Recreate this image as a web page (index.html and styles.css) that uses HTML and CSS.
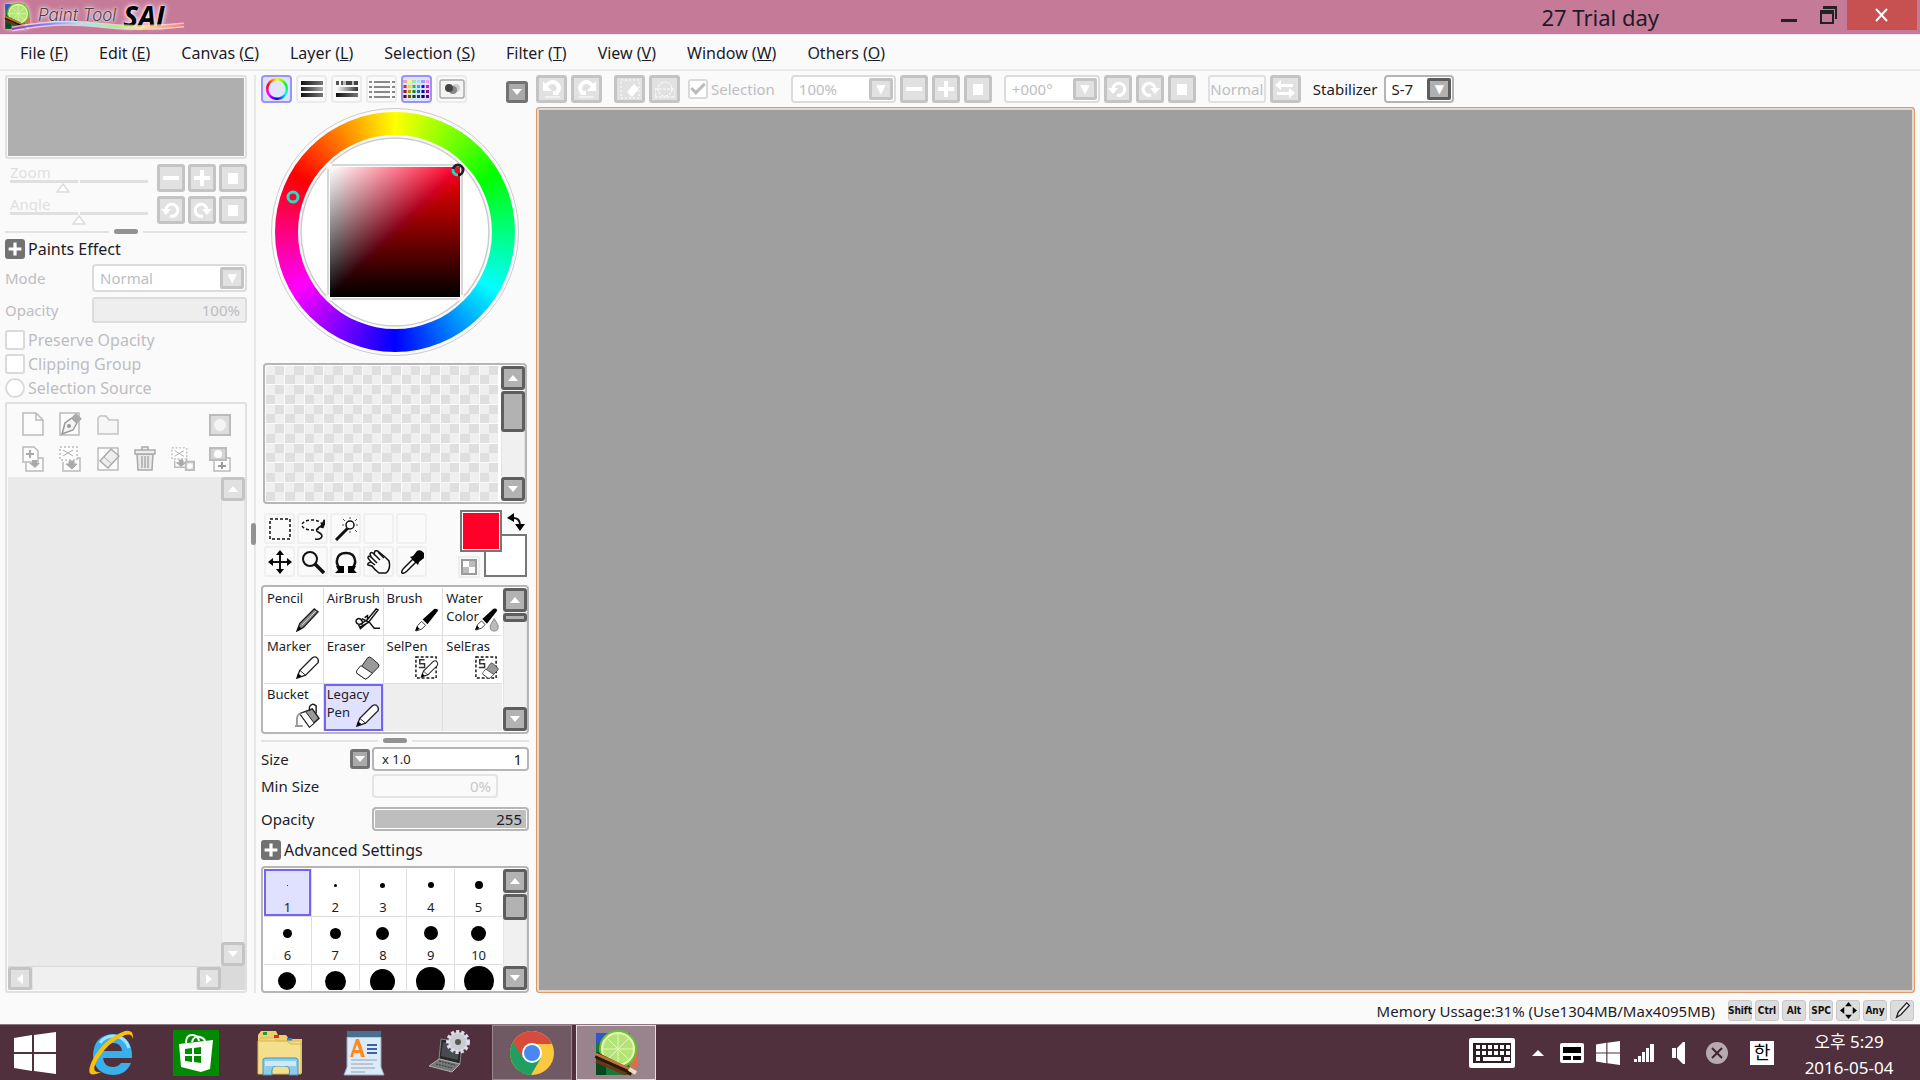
FILE: index.html
```html
<!DOCTYPE html>
<html lang="en">
<head>
    <meta charset="UTF-8">
    <meta name="viewport" content="width=device-width, initial-scale=1.0">
    <title>PaintTool SAI</title>
    <link rel="stylesheet" href="styles.css">
</head>
<body>
    <!-- Shared icons -->
    <svg class="defs" width="0" height="0" aria-hidden="true">
        <defs>
            <linearGradient id="rainbow"><stop offset="0" stop-color="#a030c0"/><stop offset=".2" stop-color="#8080ff"/><stop offset=".4" stop-color="#90f0ff"/><stop offset=".6" stop-color="#90ff70"/><stop offset=".75" stop-color="#fff060"/><stop offset="1" stop-color="#ff7070"/></linearGradient>
            <linearGradient id="bar"><stop offset="0" stop-color="#111"/><stop offset="1" stop-color="#777"/></linearGradient>
            <linearGradient id="barLight"><stop offset="0" stop-color="#fff"/><stop offset="1" stop-color="#333"/></linearGradient>
            <linearGradient id="barMid"><stop offset="0" stop-color="#222"/><stop offset="1" stop-color="#aaa"/></linearGradient>
        </defs>
        <symbol id="i-minus" viewBox="0 0 20 20"><path d="M2 10h16" stroke="currentColor" stroke-width="4"/></symbol>
        <symbol id="i-plus" viewBox="0 0 20 20"><path d="M2 10h16M10 2v16" stroke="currentColor" stroke-width="4"/></symbol>
        <symbol id="i-stop" viewBox="0 0 20 20"><path d="M5 5h10v11H5z" fill="currentColor"/></symbol>
        <symbol id="i-ccw" viewBox="0 0 20 20"><path d="M5 11V9a6 6 0 1 1 4 7" fill="none" stroke="currentColor" stroke-width="3"/><path d="M0 9h10l-5 6z" fill="currentColor"/></symbol>
        <symbol id="i-cw" viewBox="0 0 20 20"><path d="M15 11V9a6 6 0 1 0-4 7" fill="none" stroke="currentColor" stroke-width="3"/><path d="M20 9H10l5 6z" fill="currentColor"/></symbol>
        <symbol id="i-undo" viewBox="0 0 20 20"><path d="M4 7q5-6 10-3 5 4 1 10h-4" fill="none" stroke="currentColor" stroke-width="4"/><path d="M1 2v10h9z" fill="currentColor"/><path d="M3 18h15" stroke="currentColor"/></symbol>
        <symbol id="i-redo" viewBox="0 0 20 20"><path d="M16 7q-5-6-10-3-5 4-1 10h4" fill="none" stroke="currentColor" stroke-width="4"/><path d="M19 2v10h-9z" fill="currentColor"/><path d="M2 18h15" stroke="currentColor"/></symbol>
        <symbol id="i-up" viewBox="0 0 12 12"><path d="M1 9l5-6 5 6z" fill="currentColor"/></symbol>
        <symbol id="i-down" viewBox="0 0 12 12"><path d="M1 3l5 6 5-6z" fill="currentColor"/></symbol>
        <symbol id="i-left" viewBox="0 0 12 12"><path d="M9 1L3 6l6 5z" fill="currentColor"/></symbol>
        <symbol id="i-right" viewBox="0 0 12 12"><path d="M3 1l6 5-6 5z" fill="currentColor"/></symbol>
        <symbol id="i-windows" viewBox="0 0 42 42"><path d="M0 6l18-3v17H0zM20 3l22-3v20H20zM0 22h18v17L0 36zM20 22h22v20l-22-3z" fill="currentColor"/></symbol>
        <symbol id="i-sai" viewBox="0 0 48 48">
            <path d="M4 4h34v42H4z" fill="#187838"/><path d="M4 4h9v10H4z" fill="#3058c8"/><path d="M4 24l10-4v26H4z" fill="#084820"/>
            <path d="M38 8q10 9 8 32l-9-3z" fill="#d87050"/>
            <circle cx="26" cy="20" r="19" fill="#68c038"/><circle cx="26" cy="20" r="17" fill="#e8f8b0"/>
            <circle cx="26" cy="20" r="15" fill="#b4e478"/>
            <path d="M26 5v30M11 20h30M15 9l22 22M37 9L15 31" stroke="#e4f6b8"/>
            <path d="M4 26l36 18" stroke="#301408" stroke-width="6"/><path d="M4 25l38 17" stroke="#b87838" stroke-width="3"/><path d="M4 32l30 13" stroke="#6a3818" stroke-width="3"/><path d="M37 40l7 4" stroke="#f0dcb0" stroke-width="4"/>
        </symbol>
        <symbol id="i-pen" viewBox="0 0 26 26"><path d="M2 24l3-8L18 3q3-2 5 0t1 5L11 21z" fill="#fff" stroke="#222" stroke-width="1.4"/><path d="M5 16l6 5" stroke="#222"/><path d="M2 24l1-5 4 3z" fill="#000"/></symbol>
        <symbol id="i-eraser" viewBox="0 0 26 26"><path d="M2 19L13 3q2-2 4 0l7 6q2 2 0 4L13 24q-2 2-4 0z" fill="#999" stroke="#222"/><path d="M2 19q-1-1 0-3l4-5 12 8-5 5q-2 2-4 0z" fill="#fff" stroke="#222"/></symbol>
        <symbol id="i-brush" viewBox="0 0 26 26"><path d="M2 25l2-6 4-4 4 4-4 4z" fill="#fff" stroke="#333"/><path d="M1 25l2-5 3 3z" fill="#000"/><path d="M9 13L21 2q4-1 4 2L14 18z"/></symbol>
        <symbol id="i-page" viewBox="0 0 24 26"><path d="M2 2h13l7 7v15H2z" fill="#fcfcfc" stroke="#bbb" stroke-width="1.5"/><path d="M15 2v7h7" fill="none" stroke="#bbb" stroke-width="1.5"/></symbol>
    </svg>

    <header class="titlebar">
        <div class="logo">
            <svg class="logo-icon" viewBox="0 0 48 48"><use href="#i-sai"/></svg>
            <span class="logo-name">Paint Tool</span>
            <span class="logo-sai">SAI</span>
            <svg class="logo-wave" viewBox="0 0 180 14"><path d="M4 9Q50 0 90 5T176 5" fill="none" stroke="#ffe8f4" stroke-opacity=".7" stroke-width="5"/><path d="M4 9Q50 0 90 5T176 5" fill="none" stroke="url(#rainbow)" stroke-width="2"/></svg>
        </div>
        <span class="trial">27 Trial day</span>
        <div class="window-buttons">
            <button aria-label="Minimize"><svg width="18" height="18"><path d="M1 13h16v3H1z" fill="#222"/></svg></button>
            <button aria-label="Restore"><svg width="20" height="20"><path d="M5 1h14v13h-2V4H5zM2 5h14v14H2zm2 4v8h10V9z" fill="#222" fill-rule="evenodd"/></svg></button>
            <button class="close" aria-label="Close"><svg width="16" height="14"><path d="M2 1l11 12M13 1L2 13" stroke="#fff" stroke-width="2"/></svg></button>
        </div>
    </header>

    <nav class="menu">
        <button>File (<u>F</u>)</button>
        <button>Edit (<u>E</u>)</button>
        <button>Canvas (<u>C</u>)</button>
        <button>Layer (<u>L</u>)</button>
        <button>Selection (<u>S</u>)</button>
        <button>Filter (<u>T</u>)</button>
        <button>View (<u>V</u>)</button>
        <button>Window (<u>W</u>)</button>
        <button>Others (<u>O</u>)</button>
    </nav>

    <main class="workspace">
        <!-- Navigator and layers -->
        <aside class="layers-column">
            <div class="navigator"></div>
            <div class="nav-row">
                <div class="nav-slider"><label for="zoom">Zoom</label><input type="range" id="zoom" min="0" max="100" value="37" disabled></div>
                <button class="tool-btn" aria-label="Zoom out" disabled><svg><use href="#i-minus"/></svg></button>
                <button class="tool-btn" aria-label="Zoom in" disabled><svg><use href="#i-plus"/></svg></button>
                <button class="tool-btn" aria-label="Reset zoom" disabled><svg><use href="#i-stop"/></svg></button>
            </div>
            <div class="nav-row">
                <div class="nav-slider"><label for="angle">Angle</label><input type="range" id="angle" min="0" max="100" value="50" disabled></div>
                <button class="tool-btn" aria-label="Rotate left" disabled><svg><use href="#i-ccw"/></svg></button>
                <button class="tool-btn" aria-label="Rotate right" disabled><svg><use href="#i-cw"/></svg></button>
                <button class="tool-btn" aria-label="Reset angle" disabled><svg><use href="#i-stop"/></svg></button>
            </div>
            <div class="grip"></div>

            <button class="expander"><svg><use href="#i-plus"/></svg>Paints Effect</button>
            <div class="prop">
                <label for="mode">Mode</label>
                <span class="select"><select id="mode" disabled><option>Normal</option></select></span>
            </div>
            <div class="prop">
                <label for="layer-opacity">Opacity</label>
                <input type="text" class="value" id="layer-opacity" value="100%" disabled>
            </div>
            <div class="checks">
                <label><input type="checkbox" disabled>Preserve Opacity</label>
                <label><input type="checkbox" disabled>Clipping Group</label>
                <label><input type="radio" disabled>Selection Source</label>
            </div>

            <div class="layer-box">
                <div class="layer-tools">
                    <button aria-label="New layer" disabled><svg><use href="#i-page"/></svg></button>
                    <button aria-label="New linework layer" disabled><svg viewBox="0 0 24 26"><path d="M2 2h19v22H2z" fill="#fcfcfc" stroke="#bbb" stroke-width="1.5"/><path d="M4 23l3-11 7-5 5 5-4 7z" fill="#f4f4f4" stroke="#999" stroke-width="1.5"/><circle cx="11" cy="15" r="2" fill="#999"/><path d="M14 6l4-4 6 6-5 4z" fill="#aaa"/></svg></button>
                    <button aria-label="New layer set" disabled><svg viewBox="0 0 24 26"><path d="M2 23V7l2-2h6l3 4h9v14z" fill="#f6f6f6" stroke="#c4c4c4" stroke-width="1.5"/></svg></button>
                    <span></span><span></span>
                    <button aria-label="New layer mask" disabled><svg viewBox="0 0 24 26"><path d="M2 4h20v20H2z" fill="#ddd" stroke="#bbb" stroke-width="2"/><circle cx="12" cy="14" r="6" fill="#f4f4f4"/></svg></button>
                    <button aria-label="Transfer down" disabled><svg viewBox="0 0 24 26"><path d="M13 12h9v13H5v-9" fill="#fcfcfc" stroke="#bbb" stroke-width="1.5"/><path d="M2 1h11l4 4v11H2z" fill="#fcfcfc" stroke="#bbb" stroke-width="1.5"/><path d="M9 4v8M5 8h8" stroke="#aaa" stroke-width="2"/><path d="M8 17h3v-3h5v3h3l-5 5z" fill="#aaa"/></svg></button>
                    <button aria-label="Merge down" disabled><svg viewBox="0 0 24 26"><path d="M17 12h5v13H5v-9" fill="#fcfcfc" stroke="#bbb" stroke-width="1.5"/><path d="M2 1h17v13H2z" fill="#fff" stroke="#bbb" stroke-width="1.5" stroke-dasharray="2 2"/><path d="M5 4l10 6M5 10l10-6M8 18h3v-3h5v3h3l-5 5z" fill="#aaa" stroke="#aaa"/></svg></button>
                    <button aria-label="Clear layer" disabled><svg viewBox="0 0 24 26"><path d="M2 2h20v22H2z" fill="#fcfcfc" stroke="#bbb" stroke-width="1.5"/><path d="M4 15L15 3l8 7-11 12z" fill="#eee" stroke="#aaa" stroke-width="1.5"/><path d="M8 11l8 7" stroke="#aaa"/></svg></button>
                    <button aria-label="Delete layer" disabled><svg viewBox="0 0 24 26"><path d="M4 8l1 16h14l1-16z" fill="#e8e8e8" stroke="#aaa" stroke-width="1.5"/><path d="M2 4h20v4H2zM9 4V1h6v3M9 10v12M12 10v12M15 10v12" fill="#eee" stroke="#aaa" stroke-width="1.5"/></svg></button>
                    <button aria-label="Apply mask" disabled><svg viewBox="0 0 26 26"><path d="M17 12v10H4v-7" fill="#fcfcfc" stroke="#bbb" stroke-width="1.5"/><path d="M1 1h16v12H1z" fill="#fff" stroke="#bbb" stroke-width="1.5" stroke-dasharray="2 2"/><path d="M4 4l10 6M4 10l10-6M6 17h3v-3h4v3h3l-5 4z" fill="#aaa" stroke="#aaa"/><path d="M16 16h9v9h-9z" fill="#ddd" stroke="#bbb" stroke-width="2"/><circle cx="20.500" cy="20.500" r="3" fill="#fff"/></svg></button>
                    <button aria-label="Link mask" disabled><svg viewBox="0 0 24 26"><path d="M6 12h16v13H6z" fill="#fcfcfc" stroke="#bbb" stroke-width="1.5"/><path d="M2 2h16v12H2z" fill="#d4d4d4" stroke="#bbb" stroke-width="2"/><circle cx="10" cy="8" r="4" fill="#fff"/><path d="M14 16v7M10 20h8" stroke="#999" stroke-width="2"/></svg></button>
                </div>
                <div class="layer-list">
                    <div class="scroll pale">
                        <button aria-label="Scroll up" disabled><svg><use href="#i-up"/></svg></button>
                        <div class="track"></div>
                        <button aria-label="Scroll down" disabled><svg><use href="#i-down"/></svg></button>
                    </div>
                </div>
                <div class="scroll-x">
                    <button aria-label="Scroll left" disabled><svg><use href="#i-left"/></svg></button>
                    <div class="track"></div>
                    <button aria-label="Scroll right" disabled><svg><use href="#i-right"/></svg></button>
                </div>
            </div>
        </aside>
        <div class="splitter"></div>

        <!-- Colors, tools and brushes -->
        <aside class="tools-column">
            <div class="color-modes">
                <button class="mode on" aria-label="Color wheel"><span class="mini-wheel"></span></button>
                <button class="mode" aria-label="RGB sliders"><svg width="24" height="20"><path d="M1 2h22v4H1zM1 14h22v4H1z" fill="url(#bar)"/><path d="M1 8h22v4H1z" fill="url(#barMid)"/></svg></button>
                <button class="mode" aria-label="HSV sliders"><svg width="24" height="20"><path d="M1 2h3v4H1zM6 2h2v4H6z" fill="#555"/><path d="M8 2h3v4H8zM17 2h2v4h-2z" fill="#bbb"/><path d="M11 2h2v4h-2zM13 2h4v4h-4zM19 2h4v4h-4z" fill="#444"/><path d="M1 8h22v4H1z" fill="url(#barLight)"/><path d="M1 14h22v4H1z" fill="url(#bar)"/></svg></button>
                <button class="mode" aria-label="Color mixer"><svg width="26" height="20"><path d="M0 3h3M0 8h3M0 13h3M0 18h3M23 3h3M23 8h3M23 13h3M23 18h3" stroke="#888" stroke-width="2"/><path d="M5 2h16v2H5zM5 7h16v2H5zM5 12h16v2H5zM5 17h16v2H5z" fill="#888"/></svg></button>
                <button class="mode on" aria-label="Swatches">
                    <svg width="27" height="20" stroke-width="3" stroke-dasharray="3 2"><path d="M2 1v18" stroke="#e02020"/><path d="M6.500 1v18" stroke="#e8e000"/><path d="M11 1v18" stroke="#20c020"/><path d="M15.500 1v18" stroke="#10b8d0"/><path d="M20 1v18" stroke="#1010e8"/><path d="M24.500 1v18" stroke="#e010d0"/>
                    <path d="M.5 2.500h26" stroke="#fff" stroke-opacity=".6" stroke-dasharray="3 1.500"/><path d="M.5 12.500h26" stroke="#000" stroke-opacity=".3" stroke-dasharray="3 1.500"/><path d="M.5 17.500h26" stroke="#000" stroke-opacity=".6" stroke-dasharray="3 1.500"/></svg>
                </button>
                <button class="mode" aria-label="Scratch pad"><svg width="26" height="20"><rect x="1" y="1" width="24" height="18" rx="2" fill="#f4f4f4" stroke="#aaa" stroke-width="1.500"/><circle cx="17" cy="9" r="4" fill="#ccc"/><circle cx="14" cy="11" r="4" fill="#888"/><circle cx="10" cy="9" r="4" fill="#444"/></svg></button>
                <button class="small-btn" aria-label="Color panels"><svg><use href="#i-down"/></svg></button>
            </div>

            <div class="wheel">
                <div class="hue"></div>
                <svg class="wheel-lines" viewBox="0 0 248 248"><circle cx="124" cy="124" r="97" fill="#fafafa"/><circle cx="124" cy="124" r="94" fill="#fff" stroke="#ccc" stroke-width="1.500"/><path d="M57 57h134v134H57z" fill="#fafafa" stroke="#fafafa" stroke-width="3"/><path d="M57 57h134v134H57z" fill="none" stroke="#ccc" stroke-width="1.500" stroke-dasharray="126 8" stroke-dashoffset="-4"/></svg>
                <div class="shade"></div>
                <svg class="wheel-lines" viewBox="0 0 248 248" fill="none" stroke-width="3"><circle cx="22" cy="89" r="5" stroke="#20e0c8"/><circle cx="187" cy="62" r="5" stroke="#222"/><path d="M182 61a5 5 0 0 0 5 6" stroke="#20d8c0"/></svg>
            </div>

            <div class="panel swatches">
                <div class="swatch-grid" id="swatches"></div>
                <div class="scroll">
                    <button aria-label="Scroll up"><svg><use href="#i-up"/></svg></button>
                    <div class="track"><div class="thumb tall"></div></div>
                    <button aria-label="Scroll down"><svg><use href="#i-down"/></svg></button>
                </div>
            </div>

            <div class="tool-area">
                <div class="tool-grid">
                    <button aria-label="Rectangle selection"><svg viewBox="0 0 24 24"><path d="M2 2h20v20H2z" fill="none" stroke="#111" stroke-width="1.500" stroke-dasharray="3 2"/></svg></button>
                    <button aria-label="Lasso"><svg viewBox="0 0 24 24" fill="none" stroke="#111" stroke-width="1.500"><ellipse cx="11" cy="8" rx="10" ry="5" stroke-dasharray="3 2"/><path d="M24 3l-4 6q-7 4-3 6t4 4q-1 4-7 3"/><path d="M24 3l-3 8" stroke-width="3"/></svg></button>
                    <button aria-label="Magic wand"><svg viewBox="0 0 24 24" stroke="#111" fill="none"><path d="M2 23L14 11" stroke-width="3"/><circle cx="16" cy="8" r="4" stroke-width="1.500" fill="#fff"/><path d="M16 0v2M9 2l2 2M23 2l-2 2M8 8h2M22 8h2M16 14v2M21 13l2 2" stroke="#555"/></svg></button>
                    <button aria-label="Empty"></button>
                    <button aria-label="Empty"></button>
                    <button aria-label="Move"><svg viewBox="0 0 24 24"><path d="M12 3v18M3 12h18" stroke="#111" stroke-width="2"/><path d="M12 0l4 5H8zM12 24l4-5H8zM0 12l5-4v8zM24 12l-5-4v8z"/></svg></button>
                    <button aria-label="Zoom"><svg viewBox="0 0 24 24" fill="none" stroke="#111"><circle cx="9" cy="9" r="7" stroke-width="2"/><path d="M14 14l9 9" stroke-width="3.500"/></svg></button>
                    <button aria-label="Rotate"><svg viewBox="0 0 24 24"><path d="M7 21V19Q2 15 3 10q1-7 9-7t9 7q1 5-4 9v2" fill="none" stroke="#111" stroke-width="2.500"/><path d="M2 16h8v7H1l3-3zM22 16h-8v7h9l-3-3z"/></svg></button>
                    <button aria-label="Hand"><svg viewBox="0 0 24 24" fill="#fff" stroke="#111" stroke-width="1.500"><path d="M12 23Q7 19 5 16l-4-1q-1-2 3-3L1 8q0-3 3-1L3 4q1-3 4 0l1-3q2-1 4 1l6 5 4 4q2 8-3 12z"/><path d="M4 7l6 6M7 4l6 6M11 2l6 6M4 12l4 3"/></svg></button>
                    <button aria-label="Color picker"><svg viewBox="0 0 24 24"><path d="M2 23q-1-2 2-5L13 9l3 3-9 9q-3 3-5 2z" fill="#fff" stroke="#111" stroke-width="1.500"/><path d="M10 7l3-1 4-5q3-2 6 1t1 6l-5 4-1 3z"/></svg></button>
                </div>
                <div class="color-pair">
                    <button class="fore" aria-label="Foreground color"></button>
                    <button class="back" aria-label="Background color"></button>
                    <button class="clear" aria-label="Transparent"></button>
                    <button class="swap" aria-label="Swap colors"><svg viewBox="0 0 18 18"><path d="M5 5q8-1 8 8" fill="none" stroke="#111" stroke-width="2"/><path d="M0 5l7-5v9zM8 11h10l-5 7z"/></svg></button>
                </div>
            </div>

            <div class="panel brushes">
                <div class="brush-grid">
                    <button>Pencil<svg viewBox="0 0 26 26"><path d="M2 25l3-8L20 2l4 3L9 21z" fill="#888" stroke="#222" stroke-width="1.400"/><path d="M7 19L22 4" stroke="#ccc"/><path d="M2 25l2-5 3 3z"/></svg></button>
                    <button>AirBrush<svg viewBox="0 0 26 26" fill="none" stroke="#111" stroke-width="1.500"><path d="M5 21l9-5L24 3l-2-1-9 11-9 6zM1 14q3-4 6 0t-2 4q-4 0-4-4M7 12l8 4 5 6h6M10 11l3-2v4M12 17l-7 6"/></svg></button>
                    <button>Brush<svg><use href="#i-brush"/></svg></button>
                    <button>Water Color<svg viewBox="0 0 26 26"><use href="#i-brush" width="25" height="25"/><path d="M21 12l4 7q1 6-4 6t-4-6z" fill="#bbb" stroke="#888"/></svg></button>
                    <button>Marker<svg><use href="#i-pen"/></svg></button>
                    <button>Eraser<svg><use href="#i-eraser"/></svg></button>
                    <button>SelPen<svg viewBox="0 0 26 26"><path d="M2 2h21v22H2z" fill="none" stroke="#111" stroke-width="1.500" stroke-dasharray="3 2"/><path d="M11 5H6v4h5v4H5" fill="none" stroke="#333" stroke-width="1.500"/><use href="#i-pen" x="6" y="4" width="20" height="21"/></svg></button>
                    <button>SelEras<svg viewBox="0 0 26 26"><path d="M2 2h21v22H2z" fill="none" stroke="#111" stroke-width="1.500" stroke-dasharray="3 2"/><path d="M11 5H6v4h5v4H5" fill="none" stroke="#333" stroke-width="1.500"/><use href="#i-eraser" x="8" y="7" width="18" height="18"/></svg></button>
                    <button>Bucket<svg viewBox="0 0 26 26"><path d="M5 11L18 6l7 10-10 9z" fill="#999" stroke="#222" stroke-width="1.500"/><path d="M5 11l6-2 9 12-5 4z" fill="#fff" stroke="#222"/><path d="M15 8V4q3-5 7-1v8" fill="none" stroke="#222" stroke-width="1.500"/><path d="M6 11q-4 1-4 6v7h-2 8" fill="none" stroke="#999" stroke-width="2"/></svg></button>
                    <button class="on">Legacy Pen<svg><use href="#i-pen"/></svg></button>
                    <button class="empty" aria-label="Empty"></button>
                    <button class="empty" aria-label="Empty"></button>
                </div>
                <div class="scroll">
                    <button aria-label="Scroll up"><svg><use href="#i-up"/></svg></button>
                    <div class="track"><div class="thumb short"></div></div>
                    <button aria-label="Scroll down"><svg><use href="#i-down"/></svg></button>
                </div>
            </div>
            <div class="grip"></div>

            <div class="setting">
                <label for="size">Size</label>
                <button class="small-btn" aria-label="Size range"><svg><use href="#i-down"/></svg></button>
                <span class="field"><span class="unit">x 1.0</span><input type="text" id="size" value="1"></span>
            </div>
            <div class="setting">
                <label for="min-size">Min Size</label>
                <span class="field off"><input type="text" id="min-size" value="0%" disabled></span>
            </div>
            <div class="setting opacity">
                <label for="opacity">Opacity</label>
                <span class="field full"><input type="text" id="opacity" value="255"></span>
            </div>
            <button class="expander"><svg><use href="#i-plus"/></svg>Advanced Settings</button>

            <div class="panel sizes">
                <div class="size-grid" id="sizes"></div>
                <div class="scroll">
                    <button aria-label="Scroll up"><svg><use href="#i-up"/></svg></button>
                    <div class="track"><div class="thumb"></div></div>
                    <button aria-label="Scroll down"><svg><use href="#i-down"/></svg></button>
                </div>
            </div>
        </aside>

        <!-- Canvas -->
        <section class="canvas-column">
            <div class="toolbar">
                <div class="group">
                    <button class="tool-btn wide" aria-label="Undo" disabled><svg><use href="#i-undo"/></svg></button>
                    <button class="tool-btn wide" aria-label="Redo" disabled><svg><use href="#i-redo"/></svg></button>
                </div>
                <div class="group">
                    <button class="tool-btn wide" aria-label="Deselect" disabled><svg viewBox="0 0 20 20"><path d="M1 1h18v18H1z" fill="none" stroke="#fff" stroke-dasharray="2 2"/><path d="M7 13l7-8 5 5-7 8z" fill="#fff"/></svg></button>
                    <button class="tool-btn wide" aria-label="Invert selection" disabled><svg viewBox="0 0 20 20" fill="none" stroke="#fff" stroke-dasharray="3 1"><circle cx="10" cy="10" r="7"/><path d="M0 10h20M0 10v8h20v-8" /></svg></button>
                    <label class="selection"><input type="checkbox" checked disabled>Selection</label>
                </div>
                <div class="group">
                    <span class="select zoom-select"><select aria-label="Zoom" disabled><option>100%</option></select></span>
                    <button class="tool-btn" aria-label="Zoom out" disabled><svg><use href="#i-minus"/></svg></button>
                    <button class="tool-btn" aria-label="Zoom in" disabled><svg><use href="#i-plus"/></svg></button>
                    <button class="tool-btn" aria-label="Reset zoom" disabled><svg><use href="#i-stop"/></svg></button>
                </div>
                <div class="group">
                    <span class="select angle-select"><select aria-label="Angle" disabled><option>+000°</option></select></span>
                    <button class="tool-btn" aria-label="Rotate left" disabled><svg><use href="#i-ccw"/></svg></button>
                    <button class="tool-btn" aria-label="Rotate right" disabled><svg><use href="#i-cw"/></svg></button>
                    <button class="tool-btn" aria-label="Reset angle" disabled><svg><use href="#i-stop"/></svg></button>
                </div>
                <div class="group">
                    <button class="blend" disabled>Normal</button>
                    <button class="tool-btn wide" aria-label="Flip" disabled><svg viewBox="0 0 20 20"><path d="M0 6l6-5v4h12v3H6v3zM20 14l-6-5v4H2v3h12v3z" fill="#fff"/></svg></button>
                </div>
                <div class="group">
                    <label for="stabilizer">Stabilizer</label>
                    <span class="select active stab-select"><select id="stabilizer"><option>S-7</option></select></span>
                </div>
            </div>
            <div class="canvas"></div>
        </section>
    </main>

    <footer class="status">
        <span>Memory Ussage:31% (Use1304MB/Max4095MB)</span>
        <div class="keys">
            <kbd>Shift</kbd><kbd>Ctrl</kbd><kbd>Alt</kbd><kbd>SPC</kbd>
            <kbd><svg viewBox="0 0 20 20"><path d="M10 0l4 5H6zM10 20l4-5H6zM0 10l5-4v8zM20 10l-5-4v8z"/></svg></kbd>
            <kbd>Any</kbd>
            <kbd><svg viewBox="0 0 20 20"><path d="M3 18l2-6L15 1l3 3L8 15z" fill="#eee" stroke="#222" stroke-width="1.500"/></svg></kbd>
        </div>
    </footer>

    <div class="taskbar">
        <button aria-label="Start"><svg class="start"><use href="#i-windows"/></svg></button>
        <button aria-label="Internet Explorer"><svg viewBox="0 0 48 48"><path d="M44 29H15q1 9 10 9 5 0 8-4h10q-5 12-18 12Q6 45 5 26 6 6 25 5q20 2 19 24zM15 22h19q-1-8-9-8t-10 8z" fill="#38b0ec" fill-rule="evenodd"/><path d="M12 14q5-7 13-7 12 0 16 12" fill="none" stroke="#a0e4fc" stroke-width="3"/><path d="M8 45Q-3 48 4 32 15 10 37 2q9-2 8 8-1-6-8-4Q20 13 10 30 1 45 14 43z" fill="#f8c010"/></svg></button>
        <button aria-label="Store"><svg viewBox="0 0 48 48"><path d="M1 1h46v46H1z" fill="#008a00"/><path d="M7 15l34-4-3 29-9 3-20-5z" fill="#fff"/><path d="M14 14q0-8 6-8t7 6M20 13q2-7 8-5 4 1 5 4" fill="none" stroke="#fff" stroke-width="2"/><path d="M13 20l7-1v6h-7zM22 19l7-1v7h-7zM13 27h7v6l-7-1zM22 27h7v7l-7-1z" fill="#008a00"/></svg></button>
        <button aria-label="File Explorer"><svg viewBox="0 0 48 48"><path d="M2 6l3-4h15l2 4h8l3 4h13v34H2z" fill="#ecd070"/><path d="M7 3h4v3H7z" fill="#28983c"/><path d="M18 6h5v3h-5z" fill="#e03020"/><path d="M31 9h5v3h-5z" fill="#2880d8"/><path d="M4 9h14l3 3h10l3 3h12M2 12h43v33H2z" fill="#f4e08c" stroke="#d8b850"/><path d="M7 31q0-2 3-2h29q3 0 3 2v15h-9q2-9-4-9h-9q-5 0-4 9H7z" fill="#90ccea" stroke="#3c94c0"/><path d="M9 32h31v5H9z" fill="#c8ecfc"/></svg></button>
        <button aria-label="WordPad"><svg viewBox="0 0 48 48"><path d="M7 8h34v30l3 8H4l3-8z" fill="#dcebf8" stroke="#90a8c0"/><path d="M7 2h34v6H7z" fill="#487090"/><path d="M10 28l6-18h3l6 18h-4l-1-4h-6l-1 4zm5-7h4l-2-6z" fill="#ff8820" fill-rule="evenodd"/><path d="M27 16h10M27 20h10M27 24h10" stroke="#4060a8" stroke-width="2"/><path d="M11 31h26M11 35h22M11 39h24M11 43h14" stroke="#98a0b0"/></svg></button>
        <button aria-label="Device"><svg viewBox="0 0 48 48"><path d="M17 10l21 3-2 22-21-5z" fill="#282828" stroke="#888"/><path d="M19 13l16 3-1 15-17-4z" fill="#484c50"/><path d="M15 30l21 5-8 8-23-6z" fill="#777" stroke="#aaa"/><path d="M15 32l16 4M12 35l16 4" stroke="#333" stroke-dasharray="2 1"/><circle cx="34" cy="13" r="10" fill="#c8ccd0" stroke="#dde" stroke-width="4" stroke-dasharray="3 2"/><circle cx="34" cy="13" r="3" fill="#555"/></svg></button>
        <button class="running" aria-label="Chrome"><svg viewBox="0 0 48 48"><circle cx="24" cy="24" r="22" fill="#fbc840"/><path d="M24 24L5 13a22 22 0 0 0 18 33l10-17z" fill="#20a060"/><path d="M14 28L5 13A22 22 0 0 1 44 15H24z" fill="#d84a3c"/><circle cx="24" cy="24" r="10" fill="#fff"/><circle cx="24" cy="24" r="8" fill="#4888f0"/></svg></button>
        <button class="running current" aria-label="PaintTool SAI"><svg><use href="#i-sai"/></svg></button>

        <div class="tray">
            <svg class="keyboard" width="46" height="30" viewBox="0 0 46 30"><rect width="46" height="30" rx="2" fill="#fff"/><path d="M4 5h38v20H4z" fill="#2c2025"/><path d="M7 9h34M7 15h34" stroke="#fff" stroke-width="4" stroke-dasharray="4 2"/><path d="M7 21h4M14 21h18M35 21h6" stroke="#fff" stroke-width="4"/></svg>
            <svg width="12" height="8" viewBox="0 0 12 8"><path d="M0 7l6-6 6 6z" fill="#fff"/></svg>
            <svg class="touchpad" width="24" height="20" viewBox="0 0 24 20"><rect width="24" height="20" rx="2" fill="#fff"/><path d="M3 4h18v6H3zM3 13h8v4H3zM13 13h8v4h-8z"/></svg>
            <svg width="24" height="24"><use href="#i-windows"/></svg>
            <svg width="20" height="18" viewBox="0 0 20 18"><path d="M0 15h3v3H0zM4 12h3v6H4zM8 8h3v10H8zM12 4h3v14h-3zM16 0h4v18h-4z" fill="#fff"/></svg>
            <svg class="speaker" width="13" height="22" viewBox="0 0 13 22"><path d="M0 6h4v10H0zM5 6l6-6h2v22h-2l-6-6z" fill="#fff"/></svg>
            <svg width="24" height="24" viewBox="0 0 24 24"><circle cx="12" cy="12" r="11" fill="#b8a8b0"/><path d="M7 7l10 10M17 7L7 17" stroke="#3c2830" stroke-width="2"/></svg>
            <span class="ime">한</span>
        </div>
        <div class="clock"><span>오후 5:29</span><span>2016-05-04</span></div>
    </div>

    <script>
        // 12 x 7 empty swatches
        const swatches = document.getElementById('swatches');
        for (let i = 0; i < 84; i++) {
            swatches.appendChild(document.createElement('span'));
        }

        // Brush sizes: dot diameter and label, the last row is cut off by the panel
        const dots = [1, 3, 5, 6, 8, 9, 11, 13, 14, 15, 18, 21, 25, 29, 30];
        const sizes = document.getElementById('sizes');
        dots.forEach((d, i) => {
            const cell = document.createElement('button');
            cell.setAttribute('aria-label', 'Brush size ' + (i + 1));
            if (i === 0) cell.className = 'on';
            cell.innerHTML = '<i><b style="width:' + d + 'px;height:' + d + 'px"></b></i>' + (i < 10 ? i + 1 : '');
            sizes.appendChild(cell);
        });
    </script>
</body>
</html>
```
FILE: styles.css
```css
*, *::before, *::after {
    box-sizing: border-box;
}
body {
    margin: 0;
    height: 100vh;
    display: flex;
    flex-direction: column;
    overflow: hidden;
    background: #fafafa;
    color: #1c1c28;
    font-family: "Noto Sans", "Noto Sans CJK KR", sans-serif;
    font-size: 15px;
    line-height: 20px;
}
button, input, select {
    font: inherit;
    color: inherit;
    margin: 0;
    padding: 0;
    border: 0;
    background: none;
}
svg {
    display: block;
    flex: none;
}
.defs {
    position: absolute;
}

/* Title bar */
.titlebar {
    display: flex;
    height: 34px;
    flex: none;
    background: #c57a97;
}
.logo {
    position: relative;
    display: flex;
    align-items: center;
    gap: 7px;
    height: 32px;
    margin-right: auto;
    padding-left: 3px;
    text-shadow: 0 0 2px #fff, 0 0 4px #ffe4f2, 0 0 6px #ffd0ea;
}
.logo-icon {
    width: 28px;
    height: 30px;
    filter: drop-shadow(0 0 2px #ffe0f0);
}
.logo-name {
    font-family: "Inter", sans-serif;
    font-size: 17px;
    font-weight: 300;
    font-style: italic;
    line-height: 30px;
    height: 32px;
    color: #444;
}
.logo-sai {
    font-family: "Open Sans", sans-serif;
    font-size: 28px;
    font-weight: 700;
    font-style: italic;
    line-height: 32px;
    height: 32px;
    color: #000;
}
.logo-wave {
    position: absolute;
    left: 8px;
    top: 20px;
    width: 180px;
    height: 14px;
}
.trial {
    font-size: 22px;
    line-height: 34px;
    margin-right: 110px;
}
.window-buttons {
    display: flex;
    align-items: flex-start;
    margin-right: 3px;
}
.window-buttons button {
    display: flex;
    align-items: center;
    justify-content: center;
    width: 39px;
    height: 30px;
}
.window-buttons .close {
    width: 70px;
    background: #c75050;
}

/* Menu */
.menu {
    display: flex;
    gap: 31px;
    flex: none;
    height: 37px;
    padding: 1px 20px 0;
    border-top: 1px solid #f0e0f0;
    border-bottom: 2px solid #ebebeb;
    font-size: 16px;
}

.workspace {
    display: flex;
    flex: 1;
    min-height: 0;
    padding: 4px 5px 0;
}

/* Shared buttons */
.tool-btn, .small-btn {
    display: flex;
    align-items: center;
    justify-content: center;
    flex: none;
    width: 28px;
    height: 28px;
    border: 3px solid #c4c4c4;
    border-radius: 3px;
    background: #e1e1e1;
    color: #fff;
}
.tool-btn.wide {
    width: 31px;
}
.tool-btn svg {
    width: 20px;
    height: 20px;
}
.small-btn {
    width: 22px;
    height: 22px;
    border-color: #727272;
    background: #aaa;
}
.small-btn svg {
    width: 12px;
    height: 12px;
}
.select {
    position: relative;
    display: block;
    height: 28px;
    border: 2px solid #dcdcdc;
    border-radius: 4px;
    background: #fff;
    color: #bdbdc2;
}
.select select {
    appearance: none;
    width: 100%;
    height: 100%;
    padding: 0 6px;
    opacity: 1;
}
.select::after {
    content: "▼";
    position: absolute;
    right: 1px;
    top: 1px;
    width: 24px;
    height: 22px;
    border: 3px solid #c4c4c4;
    border-radius: 2px;
    background: #e1e1e1;
    color: #fff;
    font: 12px/16px "DejaVu Sans", sans-serif;
    text-align: center;
    pointer-events: none;
}
.select.active {
    border-color: #b4b4b4;
    color: #1c1c28;
}
.select.active::after {
    border-color: #5c5c5c;
    background: #b0b0b0;
}
.grip {
    flex: none;
    height: 5px;
    background: linear-gradient(90deg, #e3e3e3 calc(50% - 17px), transparent 0 calc(50% + 17px), #e3e3e3 0) center / 100% 2px no-repeat;
}
.grip::before {
    content: "";
    display: block;
    width: 24px;
    height: 5px;
    margin: 0 auto;
    border-radius: 3px;
    background: #929292;
}
.expander {
    display: flex;
    align-items: center;
    gap: 3px;
    flex: none;
    height: 20px;
    font-size: 16px;
}
.expander svg {
    width: 20px;
    height: 20px;
    padding: 2px;
    border-radius: 3px;
    background: #727272;
    color: #fff;
}
input[type="checkbox"], input[type="radio"] {
    appearance: none;
    width: 20px;
    height: 20px;
    border: 2px solid #dadada;
    border-radius: 3px;
    background: #fff;
}
input[type="radio"] {
    border-radius: 50%;
}
input[type="checkbox"]:checked::before {
    content: "";
    display: block;
    width: 14px;
    height: 8px;
    margin: 2px 1px;
    border: solid #bbb;
    border-width: 0 0 3px 3px;
    transform: rotate(-45deg);
}

/* Layers column */
.layers-column {
    display: flex;
    flex-direction: column;
    flex: none;
    width: 242px;
}
.navigator {
    flex: none;
    height: 84px;
    margin-bottom: 5px;
    border: 2px solid #e0e0e0;
    border-radius: 3px;
    background: #afafaf;
    box-shadow: inset 0 0 0 1px #fafafa;
}
.nav-row {
    display: flex;
    flex: none;
    gap: 3px;
    height: 28px;
    margin-bottom: 4px;
}
.nav-slider {
    flex: 1;
    padding: 0 6px 0 5px;
    color: #e0e0e0;
    line-height: 16px;
}
.nav-slider label {
    display: block;
    height: 16px;
}
.nav-slider input {
    appearance: none;
    display: block;
    width: 100%;
    height: 12px;
    background: linear-gradient(90deg, #e0e0e0 calc(50% - 1px), transparent 0 calc(50% + 1px), #e0e0e0 0) 0 0 / 100% 3px no-repeat;
}
.nav-slider input::-webkit-slider-thumb {
    appearance: none;
    width: 14px;
    height: 10px;
    margin-top: 4px;
    background: url("data:image/svg+xml,%3Csvg xmlns='http://www.w3.org/2000/svg' width='14' height='10'%3E%3Cpath d='M1 9l6-8 6 8z' fill='%23fff' stroke='%23ddd' stroke-width='1.5'/%3E%3C/svg%3E") no-repeat;
}
.layers-column .grip {
    margin: 1px 0 5px;
}
.prop {
    display: flex;
    align-items: center;
    flex: none;
    height: 28px;
    margin-top: 4px;
    color: #bdbdc2;
}
.prop label {
    width: 87px;
}
.prop .select, .prop .value {
    flex: 1;
    min-width: 0;
}
.value {
    height: 26px;
    padding: 0 5px;
    border: 2px solid #dcdcdc;
    border-radius: 3px;
    background: #eee;
    text-align: right;
}
.layers-column .expander {
    margin-bottom: 1px;
}
.checks {
    display: flex;
    flex-direction: column;
    gap: 4px;
    margin: 6px 0 4px;
    color: #bdbdc2;
    font-size: 16px;
}
.checks label {
    display: flex;
    gap: 3px;
    height: 20px;
}
.layer-box {
    display: flex;
    flex-direction: column;
    flex: 1;
    min-height: 0;
    border: 2px solid #e0e0e0;
    border-radius: 3px;
    padding: 1px 0 1px 1px;
}
.layer-tools {
    display: grid;
    grid-template-columns: repeat(6, 1fr);
    flex: none;
    padding: 1px 6px 0;
    height: 72px;
}
.layer-tools button {
    display: flex;
    align-items: center;
    justify-content: center;
}
.layer-tools svg {
    width: 24px;
    height: 26px;
}
.layer-list {
    display: flex;
    justify-content: flex-end;
    flex: 1;
    min-height: 0;
    background: #eaeaea;
}

/* Scroll bars */
.scroll {
    display: flex;
    flex-direction: column;
    flex: none;
    width: 24px;
}
.scroll button, .scroll-x button {
    display: flex;
    align-items: center;
    justify-content: center;
    flex: none;
    height: 24px;
    border: 3px solid #5e5e5e;
    border-radius: 3px;
    background: #b2b2b2;
    color: #fff;
}
.scroll button svg, .scroll-x button svg {
    width: 12px;
    height: 12px;
}
.track {
    flex: 1;
    padding: 1px 0;
    background: #f0f0f0;
    border: solid #e4e4e4;
    border-width: 0 1px;
}
.thumb {
    height: 26px;
    margin: 0 -1px;
    border: 3px solid #5e5e5e;
    border-radius: 3px;
    background: #b2b2b2;
}
.thumb.tall {
    height: 41px;
}
.thumb.short {
    height: 9px;
}
.scroll.pale button, .scroll-x button {
    border-color: #c4c4c4;
    background: #e1e1e1;
}
.scroll-x {
    display: flex;
    flex: none;
    height: 24px;
    padding: 1px 24px 0 0;
    background: #dadada;
}
.scroll-x button {
    width: 24px;
    height: 23px;
}

.splitter {
    display: flex;
    align-items: center;
    flex: none;
    width: 14px;
    padding-left: 4px;
    background: linear-gradient(#e8e8e8, #e8e8e8) 7px 0 / 2px 100% no-repeat;
}
.splitter::before {
    content: "";
    width: 5px;
    height: 22px;
    border-radius: 3px;
    background: #929292;
}

/* Tools column */
.tools-column {
    display: flex;
    flex-direction: column;
    flex: none;
    width: 268px;
}
.color-modes {
    display: flex;
    gap: 4px;
    flex: none;
    height: 28px;
}
.mode {
    display: flex;
    align-items: center;
    justify-content: center;
    width: 31px;
    border: 2px solid #ebebeb;
    border-radius: 4px;
}
.mode.on {
    border-color: #9a94f4;
    background: #e0e0ff;
}
.mini-wheel {
    width: 22px;
    height: 22px;
    flex: none;
    border-radius: 50%;
    background: radial-gradient(#e4e4ff 8px, transparent 9px), conic-gradient(#ff0, #0f0 60deg, #0ff 120deg, #00f 180deg, #f0f 240deg, #f00 300deg, #ff0);
}
.color-modes .small-btn {
    margin: 6px 1px 0 auto;
}
.wheel {
    position: relative;
    flex: none;
    width: 248px;
    height: 248px;
    margin: 5px auto 7px 10px;
    border: 1px solid #ccc;
    border-radius: 50%;
}
.hue {
    position: absolute;
    inset: 3px;
    border-radius: 50%;
    background: conic-gradient(#ff0, #0f0 60deg, #0ff 120deg, #00f 180deg, #f0f 240deg, #f00 300deg, #ff0);
}
.wheel-lines {
    position: absolute;
    inset: -1px;
    width: 248px;
    height: 248px;
}
/* The two gradients add up and are then inverted, so each channel clips at black */
.shade {
    position: absolute;
    inset: 58px;
    background: linear-gradient(to right, #000, #00ffd7);
    filter: invert(1);
}
.shade::after {
    content: "";
    position: absolute;
    inset: 0;
    background: linear-gradient(#000, #fff);
    mix-blend-mode: plus-lighter;
}
.panel {
    display: flex;
    flex: none;
    border: 2px solid #b6b6b6;
    border-radius: 4px;
    padding: 1px 0 1px 1px;
    background: #fff;
}
.swatches {
    height: 141px;
    margin: 0 2px;
}
.swatch-grid {
    display: grid;
    grid-template: repeat(7, 1fr) / repeat(12, 1fr);
    gap: 1px;
    flex: 1;
    margin-right: 3px;
    background: #fafafa;
}
.swatch-grid span {
    background: conic-gradient(#dfdfdf 25%, #efefef 0 50%, #dfdfdf 0 75%, #efefef 0);
}
.tool-area {
    display: flex;
    justify-content: space-between;
    flex: none;
    margin: 9px 2px 8px 3px;
    height: 64px;
}
.tool-grid {
    display: grid;
    grid-template: repeat(2, 31px) / repeat(5, 31px);
    gap: 2px;
}
.tool-grid button {
    display: flex;
    align-items: center;
    justify-content: center;
    border: 2px solid #f0f0f0;
    border-radius: 3px;
}
.tool-grid svg {
    width: 24px;
    height: 24px;
}
.color-pair {
    position: relative;
    width: 68px;
    margin-top: -3px;
}
.color-pair button {
    position: absolute;
}
.color-pair .fore {
    left: 1px;
    top: 0;
    z-index: 1;
    width: 42px;
    height: 42px;
    border: 2px solid #777;
    background: #ff0028;
    box-shadow: inset 0 0 0 1px #fff;
}
.color-pair .back {
    right: 0;
    top: 24px;
    width: 43px;
    height: 43px;
    border: 2px solid #777;
    background: #fff;
}
.color-pair .clear {
    left: 2px;
    top: 49px;
    width: 16px;
    height: 16px;
    border: 2px solid #999;
    background: conic-gradient(#bbb 25%, #fff 0 50%, #bbb 0 75%, #fff 0);
    outline: 2px solid #eee;
    outline-offset: 1px;
}
.color-pair .swap {
    right: 2px;
    top: 3px;
    width: 18px;
    height: 18px;
}
.brushes {
    height: 149px;
}
.brush-grid {
    display: grid;
    grid-template: repeat(3, 1fr) / repeat(4, 1fr);
    gap: 1px;
    flex: 1;
    margin-right: 1px;
    background: #dedede;
}
.brush-grid button {
    position: relative;
    display: flex;
    align-items: flex-start;
    min-width: 0;
    padding: 1px 2px 0 3px;
    background: #fff;
    font-size: 13px;
    line-height: 18px;
    text-align: left;
}
.brush-grid svg {
    position: absolute;
    right: 3px;
    bottom: 3px;
    width: 25px;
    height: 25px;
}
.brush-grid .on, .size-grid .on {
    background: #e0e0ff;
    box-shadow: inset 0 0 0 2px #7464f0;
}
.brush-grid .empty {
    background: #eee;
}
.tools-column .grip {
    margin: 4px 0;
}
.setting {
    display: flex;
    align-items: center;
    flex: none;
    height: 24px;
    margin-bottom: 3px;
}
.setting label {
    width: 89px;
}
.setting .small-btn {
    width: 20px;
    height: 20px;
    margin-right: 2px;
}
.setting.opacity {
    margin: 6px 0 9px;
}
.field {
    display: flex;
    align-items: center;
    flex: 1;
    height: 24px;
    margin-left: auto;
    padding: 0 5px 0 8px;
    border: 2px solid #b6b6b6;
    border-radius: 4px;
    background: #fff;
}
.field input {
    flex: 1;
    width: 20px;
    text-align: right;
}
.field.off {
    flex: none;
    width: 126px;
    margin: 0 31px 0 auto;
    border-color: #e4e4e4;
    background: #fafafa;
    color: #c8c8cc;
}
.field.full {
    flex: none;
    width: 157px;
    background: #bebebe;
    box-shadow: inset 0 0 0 1px #fff;
}
.unit {
    font-size: 13px;
}
.tools-column .expander {
    margin-bottom: 6px;
}
.sizes {
    flex: 1;
    min-height: 0;
}
.size-grid {
    display: grid;
    grid-template-columns: repeat(5, 1fr);
    grid-auto-rows: 47px;
    gap: 1px;
    flex: 1;
    margin-right: 1px;
    overflow: hidden;
    background: #dedede;
}
.size-grid button {
    display: flex;
    flex-direction: column;
    align-items: center;
    background: #fff;
    font-size: 13px;
    line-height: 12px;
}
.size-grid i {
    display: flex;
    align-items: center;
    height: 32px;
}
.size-grid b {
    border-radius: 50%;
    background: #000;
}

/* Canvas */
.canvas-column {
    display: flex;
    flex-direction: column;
    flex: 1;
    min-width: 0;
    padding-left: 7px;
}
.toolbar {
    display: flex;
    gap: 12px;
    flex: none;
    height: 28px;
    margin-bottom: 4px;
}
.group {
    display: flex;
    align-items: center;
    gap: 4px;
}
.selection {
    display: flex;
    gap: 3px;
    margin: 0 4px;
    color: #bdbdc2;
}
.zoom-select {
    width: 105px;
}
.angle-select {
    width: 96px;
}
.stab-select {
    width: 70px;
    margin-left: 3px;
}
.stab-select select {
    padding: 0 5px;
}
.blend {
    width: 58px;
    height: 28px;
    border: 2px solid #e0e0e0;
    border-radius: 3px;
    color: #bdbdc2;
}
.canvas {
    flex: 1;
    border: 1px solid #dd9a68;
    border-radius: 3px;
    background: #9f9f9f;
    box-shadow: inset 0 0 0 2px #e4d8d0;
}

/* Status */
.status {
    display: flex;
    align-items: center;
    justify-content: flex-end;
    gap: 13px;
    flex: none;
    height: 31px;
    padding: 4px 6px 0 0;
}
.keys {
    display: flex;
    gap: 3px;
}
.keys kbd {
    display: flex;
    align-items: center;
    justify-content: center;
    width: 24px;
    height: 21px;
    border: 1px solid #c8c8c8;
    border-radius: 3px;
    background: #dcdcdc;
    font: bold 10px "DejaVu Sans Condensed", sans-serif;
    color: #111;
}
.keys svg {
    width: 17px;
    height: 17px;
}

/* Taskbar */
.taskbar {
    display: flex;
    flex: none;
    gap: 4px;
    height: 56px;
    border-top: 1px solid #8c7680;
    background: radial-gradient(ellipse at 1700px -10px, #6c2c3c, transparent 300px), #4f303c;
    color: #fff;
}
.taskbar button {
    display: flex;
    align-items: center;
    justify-content: center;
    width: 80px;
    color: #fff;
}
.taskbar button:first-child {
    width: 70px;
    margin-right: -2px;
}
.taskbar button svg {
    width: 48px;
    height: 48px;
}
.taskbar button .start {
    width: 42px;
    height: 42px;
}
.taskbar .running {
    border: 1px solid #9a8790;
    background: #715964;
}
.taskbar .current {
    border: 1px solid #e4dce0;
    background: #99848e;
}
.tray {
    display: flex;
    align-items: center;
    gap: 14px;
    margin-left: auto;
}
.keyboard {
    margin-right: 3px;
}
.touchpad {
    margin-left: 2px;
    margin-right: -2px;
}
.speaker {
    margin: 0 6px 0 4px;
}
.ime {
    width: 24px;
    height: 24px;
    margin-left: 7px;
    background: #fff;
    color: #000;
    font-size: 18px;
    line-height: 22px;
    text-align: center;
}
.clock {
    display: flex;
    flex-direction: column;
    justify-content: center;
    width: 142px;
    padding-top: 4px;
    font-size: 17px;
    line-height: 26px;
    text-align: center;
}
```
